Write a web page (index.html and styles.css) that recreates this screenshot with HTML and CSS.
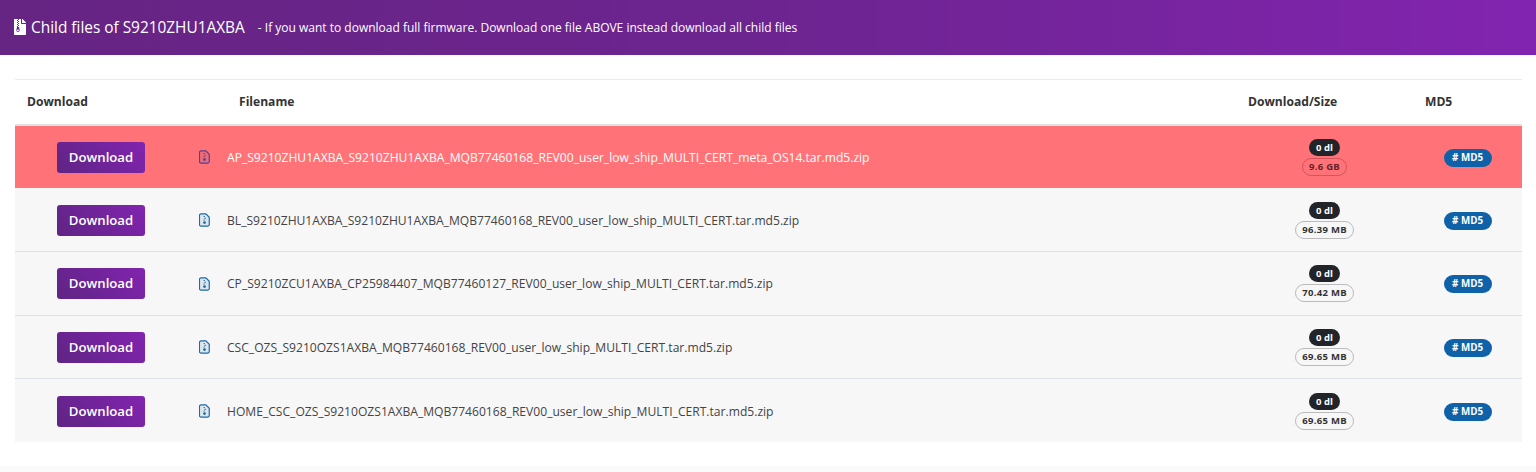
FILE: index.html
```html
<!DOCTYPE html>
<html lang="en">
<head>
  <meta charset="UTF-8" />
  <title>Child files of S9210ZHU1AXBA</title>
  <link rel="stylesheet" href="styles.css">
</head>
<body>
  <svg class="defs" width="0" height="0">
    <symbol id="zip-line" viewBox="0 0 12 15">
      <path d="M2.2.8h5.3L11.2 4.5v8a1.7 1.7 0 0 1-1.7 1.7H2.2A1.7 1.7 0 0 1 .5 12.500v-10A1.700 1.700 0 0 1 2.200.8z" fill="currentColor" fill-opacity=".12" stroke="currentColor" stroke-width="1.300"/>
      <path d="M5 3h1.300v1.300H5zM6 5h1.300v1.300H6zM5 7h1.300v1H5z" fill="currentColor"/>
      <circle cx="6" cy="10.300" r="1.500" fill="currentColor"/>
    </symbol>
  </svg>

  <header class="top-bar">
    <svg class="top-icon" viewBox="0 0 384 512"><path fill="currentColor" d="M377 105L279.100 7c-4.500-4.500-10.600-7-17-7H256v128h128v-6.100c0-6.300-2.500-12.400-7-16.900zM128.400 336c-17.900 0-32.400 12.100-32.400 27 0 15 14.600 27 32.500 27s32.400-12.100 32.400-27-14.600-27-32.500-27zM224 136V0h-63.600v32h-32V0H24C10.700 0 0 10.700 0 24v464c0 13.300 10.700 24 24 24h336c13.300 0 24-10.700 24-24V160H248c-13.200 0-24-10.800-24-24zM95.900 32h32v32h-32zm32.300 384c-33.200 0-58-30.400-51.400-62.900L96.400 256v-32h32v-32h-32v-32h32v-32h-32V96h32V64h32v32h-32v32h32v32h-32v32h32v32h-32v32h22.100c5.700 0 10.700 4.100 11.800 9.700l17.300 87.700c6.400 32.400-18.400 62.600-51.400 62.600z"/></svg>
    <span class="top-title">Child files of S9210ZHU1AXBA</span>
    <small class="top-note">- If you want to download full firmware. Download one file ABOVE instead download all child files</small>
  </header>

  <main class="content">
    <table class="files">
      <colgroup>
        <col class="col-dl"><col><col class="col-size"><col class="col-md5">
      </colgroup>
      <thead>
        <tr>
          <th>Download</th>
          <th class="th-name">Filename</th>
          <th>Download/Size</th>
          <th>MD5</th>
        </tr>
      </thead>
      <tbody>
        <tr class="row-main">
          <td class="center"><a class="btn">Download</a></td>
          <td><div class="name"><svg class="zip"><use href="#zip-line"/></svg>AP_S9210ZHU1AXBA_S9210ZHU1AXBA_MQB77460168_REV00_user_low_ship_MULTI_CERT_meta_OS14.tar.md5.zip</div></td>
          <td class="center"><span class="pill pill-dl">0 dl</span><span class="pill pill-size">9.6 GB</span></td>
          <td class="center"><span class="pill pill-md5"># MD5</span></td>
        </tr>
        <tr>
          <td class="center"><a class="btn">Download</a></td>
          <td><div class="name"><svg class="zip"><use href="#zip-line"/></svg>BL_S9210ZHU1AXBA_S9210ZHU1AXBA_MQB77460168_REV00_user_low_ship_MULTI_CERT.tar.md5.zip</div></td>
          <td class="center"><span class="pill pill-dl">0 dl</span><span class="pill pill-size">96.39 MB</span></td>
          <td class="center"><span class="pill pill-md5"># MD5</span></td>
        </tr>
        <tr>
          <td class="center"><a class="btn">Download</a></td>
          <td><div class="name"><svg class="zip"><use href="#zip-line"/></svg>CP_S9210ZCU1AXBA_CP25984407_MQB77460127_REV00_user_low_ship_MULTI_CERT.tar.md5.zip</div></td>
          <td class="center"><span class="pill pill-dl">0 dl</span><span class="pill pill-size">70.42 MB</span></td>
          <td class="center"><span class="pill pill-md5"># MD5</span></td>
        </tr>
        <tr>
          <td class="center"><a class="btn">Download</a></td>
          <td><div class="name"><svg class="zip"><use href="#zip-line"/></svg>CSC_OZS_S9210OZS1AXBA_MQB77460168_REV00_user_low_ship_MULTI_CERT.tar.md5.zip</div></td>
          <td class="center"><span class="pill pill-dl">0 dl</span><span class="pill pill-size">69.65 MB</span></td>
          <td class="center"><span class="pill pill-md5"># MD5</span></td>
        </tr>
        <tr>
          <td class="center"><a class="btn">Download</a></td>
          <td><div class="name"><svg class="zip"><use href="#zip-line"/></svg>HOME_CSC_OZS_S9210OZS1AXBA_MQB77460168_REV00_user_low_ship_MULTI_CERT.tar.md5.zip</div></td>
          <td class="center"><span class="pill pill-dl">0 dl</span><span class="pill pill-size">69.65 MB</span></td>
          <td class="center"><span class="pill pill-md5"># MD5</span></td>
        </tr>
      </tbody>
    </table>
  </main>

  <div class="page-foot"></div>
</body>
</html>
```

FILE: styles.css
```css
* { box-sizing: border-box; }

body {
  margin: 0;
  background: #fff;
  color: #444;
  font-family: "Open Sans", "Noto Sans", sans-serif;
  height: 472px;
  overflow: hidden;
}

.defs { position: absolute; }

.top-bar {
  height: 55px;
  padding: 0 14px 0;
  display: flex;
  align-items: center;
  background: linear-gradient(90deg, #662483 0%, #6d2490 50%, #8224b0 100%);
  color: #fff;
}

.top-icon {
  width: 12px;
  height: 16px;
  margin: -1px 5px 0 0;
  flex: none;
}

.top-title {
  font-size: 15.400px;
  margin-right: 13px;
  white-space: nowrap;
}

.top-note {
  font-size: 12px;
  white-space: nowrap;
}

.content {
  padding: 24px 14px 0 15px;
}

.files {
  width: 100%;
  border-collapse: collapse;
  table-layout: fixed;
  font-size: 12.100px;
}

.col-dl { width: 172px; }
.col-size { width: 177px; }
.col-md5 { width: 109px; }

.files th {
  height: 45px;
  padding: 0 12px;
  text-align: left;
  font-size: 12.100px;
  font-weight: 700;
  color: #333;
  border-top: 1px solid #e9ecef;
  border-bottom: 2px solid #dfe2e5;
}

.files th.th-name { padding-left: 52px; }

.files td {
  height: 63.500px;
  padding: 1px 12px 0;
  background: #f7f7f7;
  border-bottom: 1px solid #dee2e6;
}

.files tbody tr:last-child td { border-bottom: 0; }

.row-main td {
  background: #ff7378;
  color: #fff;
  border-bottom-color: #f5f5f5;
}

.center { text-align: center; }

.btn {
  display: inline-block;
  width: 88px;
  height: 31px;
  line-height: 31px;
  border-radius: 3px;
  background: linear-gradient(45deg, #5f2483, #8224b0);
  color: #fff;
  font-size: 13.200px;
  font-weight: 600;
}

.name {
  display: flex;
  align-items: center;
  white-space: nowrap;
}

.zip {
  width: 11px;
  height: 14px;
  margin-right: 17px;
  flex: none;
  color: #1a6ba8;
}

.row-main .zip { color: #5a3f8f; }

.pill {
  display: block;
  width: fit-content;
  margin: 0 auto;
  border-radius: 10px;
  font-size: 9.500px;
  font-weight: 700;
}

.pill-dl {
  width: 31px;
  height: 17px;
  line-height: 17px;
  background: #212529;
  color: #fff;
}

.pill-size {
  margin-top: 2px;
  padding: 0 6px;
  height: 18px;
  line-height: 16px;
  border: 1px solid #bbb;
  color: #333;
  letter-spacing: .3px;
}

.row-main .pill-size {
  border-color: #d4555c;
  color: #6b1f26;
}

.pill-md5 {
  width: 48px;
  height: 18px;
  line-height: 18px;
  margin-top: 1px;
  background: #0f62a8;
  color: #fff;
  font-size: 9.800px;
}

.page-foot {
  margin-top: 24px;
  height: 20px;
  background: #fafafa;
}
```
